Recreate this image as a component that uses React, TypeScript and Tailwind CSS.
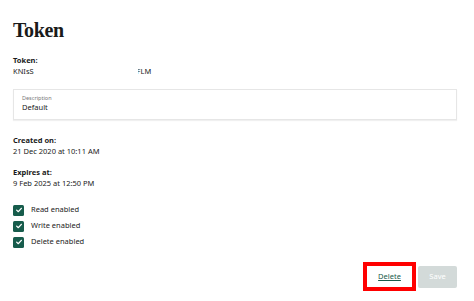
import React from 'react';

const Check: React.FC<{ label: string }> = ({ label }) => (
  <div className="flex items-center gap-[7px] h-[16px]">
    <span className="w-[11px] h-[11px] rounded-[1.5px] bg-[#175c4c] flex items-center justify-center">
      <svg viewBox="0 0 12 12" className="w-[8px] h-[8px]" fill="none" stroke="white" strokeWidth="2" strokeLinecap="round" strokeLinejoin="round">
        <path d="M2.5 6.2 L5 8.5 L9.5 3.5" />
      </svg>
    </span>
    <span className="text-[7.5px] text-[#222]">{label}</span>
  </div>
);

const App: React.FC = () => {
  return (
    <div className="w-[474px] h-[301px] bg-white px-[13px] pt-[18px] text-[#1a1a1a]" style={{ fontFamily: '"Noto Sans", "Open Sans", sans-serif' }}>
      <h1 className="text-[20px] font-bold leading-[24px] tracking-[-0.4px]" style={{ fontFamily: '"Liberation Serif", "DejaVu Serif", serif' }}>
        Token
      </h1>

      <div className="mt-[13px] leading-[11px]">
        <div className="text-[7.5px] font-bold">Token:</div>
        <div className="relative text-[7.5px]">
          KNIsS<span className="inline-block w-[103px]" />FLM
          <span className="absolute left-[122.5px] top-[1px] w-[2.5px] h-[10px] bg-white" />
        </div>
      </div>

      <div className="mt-[12px] w-[444px] h-[31px] border border-[#e6e6e6] shadow-[0_1px_1px_rgba(0,0,0,0.06)] px-[8px] pt-[4px]">
        <div className="text-[5.5px] text-[#777] leading-[8px]">Description</div>
        <div className="text-[7.5px] leading-[11px]">Default</div>
      </div>

      <div className="mt-[15px] leading-[11px]">
        <div className="text-[7.5px] font-bold">Created on:</div>
        <div className="text-[7.5px]">21 Dec 2020 at 10:11 AM</div>
      </div>

      <div className="mt-[10px] leading-[11px]">
        <div className="text-[7.5px] font-bold">Expires at:</div>
        <div className="text-[7.5px]">9 Feb 2025 at 12:50 PM</div>
      </div>

      <div className="mt-[13px] flex flex-col">
        <Check label="Read enabled" />
        <Check label="Write enabled" />
        <Check label="Delete enabled" />
      </div>

      <div className="flex justify-end items-center gap-[2px] mt-[12px] pr-[4px]">
        <button className="w-[53px] h-[29px] border-[4px] border-[#ff0000] text-[7.5px] text-[#175c4c] underline underline-offset-1">
          Delete
        </button>
        <button className="w-[39px] h-[22px] bg-[#d3dad9] text-white text-[7.5px] rounded-[2px]">Save</button>
      </div>
    </div>
  );
};

export default App;
